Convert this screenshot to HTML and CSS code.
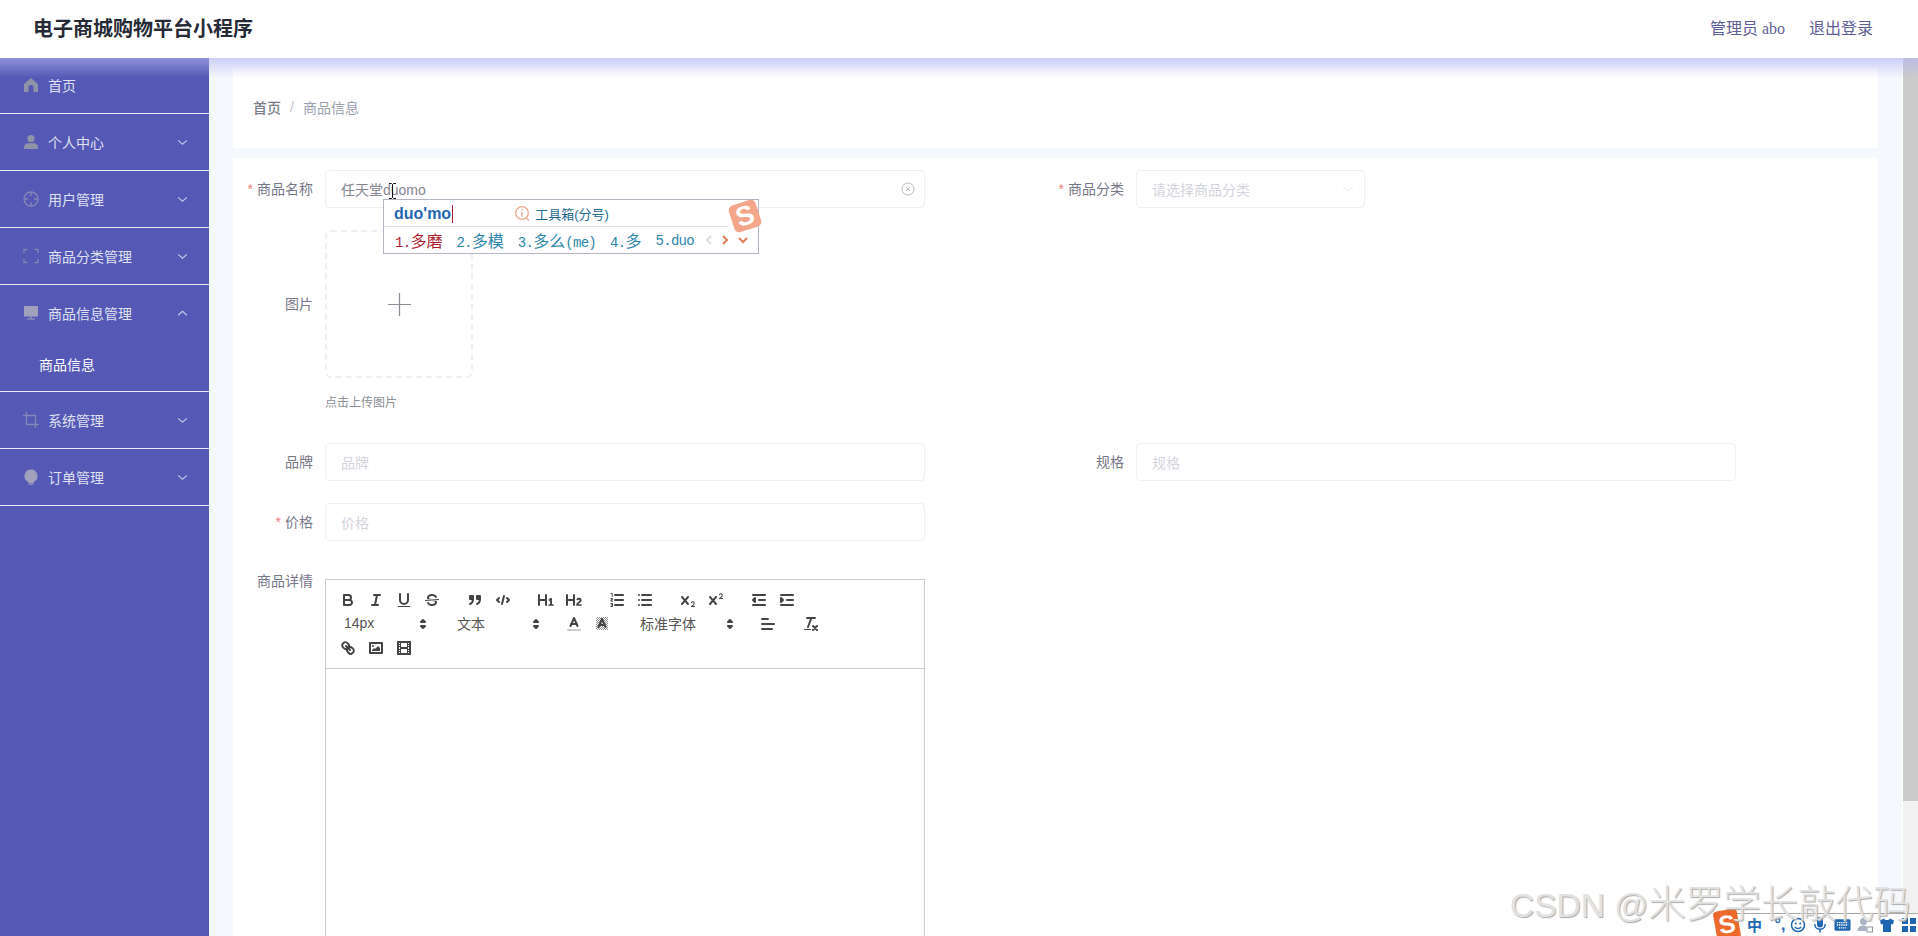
FILE: index.html
```html
<!DOCTYPE html>
<html lang="zh-CN">
<head>
<meta charset="utf-8">
<title>电子商城购物平台小程序</title>
<link rel="stylesheet" href="styles.css">
</head>
<body>
<header class="topbar">
  <div class="brand">电子商城购物平台小程序</div>
  <div class="topbar-right">
    <span class="topbar-user">管理员 abo</span>
    <span class="topbar-logout">退出登录</span>
  </div>
  <div class="topbar-glow"></div>
</header>
<div class="shell">
  <aside class="sidebar">
    <div class="nav-item nav-first">
      <svg class="nav-icon" viewBox="0 0 16 16"><path d="M8 1 15 7v8h-4.500v-4.500a2.500 2.500 0 0 0-5 0V15H1V7z"/></svg>
      <span>首页</span>
    </div>
    <div class="nav-item">
      <svg class="nav-icon" viewBox="0 0 16 16"><circle cx="8" cy="4.600" r="3.600"/><path d="M1 15v-2c0-2.500 2-3.800 4-3.800h6c2 0 4 1.300 4 3.800v2z"/></svg>
      <span>个人中心</span>
      <svg class="nav-arrow" viewBox="0 0 12 8"><polyline points="1,1.500 6,6 11,1.500"/></svg>
    </div>
    <div class="nav-item">
      <svg class="nav-icon nav-icon-line" viewBox="0 0 16 16"><circle cx="8" cy="8" r="7"/><path d="M8 1v4M8 11v4M1 8h4M11 8h4"/></svg>
      <span>用户管理</span>
      <svg class="nav-arrow" viewBox="0 0 12 8"><polyline points="1,1.500 6,6 11,1.500"/></svg>
    </div>
    <div class="nav-item">
      <svg class="nav-icon nav-icon-line" viewBox="0 0 16 16"><path d="M1 5V1.500h3.500M11.500 1.500H15V5M15 11v3.500h-3.500M4.500 14.500H1V11"/></svg>
      <span>商品分类管理</span>
      <svg class="nav-arrow" viewBox="0 0 12 8"><polyline points="1,1.500 6,6 11,1.500"/></svg>
    </div>
    <div class="nav-group">
      <div class="nav-title">
        <svg class="nav-icon nav-icon-bright" viewBox="0 0 16 16"><rect x="1" y="1" width="14" height="10.500"/><rect x="7.300" y="11.500" width="1.400" height="2"/><rect x="4" y="13.500" width="8" height="1"/></svg>
        <span>商品信息管理</span>
        <svg class="nav-arrow" viewBox="0 0 12 8"><polyline points="1,6 6,1.500 11,6"/></svg>
      </div>
      <div class="nav-sub">商品信息</div>
    </div>
    <div class="nav-item">
      <svg class="nav-icon nav-icon-line" viewBox="0 0 16 16"><path d="M3.500 0v12.500H16M0 3.500h12.500V16"/></svg>
      <span>系统管理</span>
      <svg class="nav-arrow" viewBox="0 0 12 8"><polyline points="1,1.500 6,6 11,1.500"/></svg>
    </div>
    <div class="nav-item">
      <svg class="nav-icon nav-icon-bright" viewBox="0 0 16 16"><path d="M8 .5a6.500 6.500 0 0 1 3.500 12c-.5.5-.8 1-1 1.500h-5c-.2-.5-.5-1-1-1.500A6.500 6.500 0 0 1 8 .5z"/><rect x="5.500" y="14.500" width="5" height="1.200"/></svg>
      <span>订单管理</span>
      <svg class="nav-arrow" viewBox="0 0 12 8"><polyline points="1,1.500 6,6 11,1.500"/></svg>
    </div>
  </aside>

  <main class="content">
    <nav class="crumbs">
      <span class="crumb-home">首页</span>
      <span class="crumb-sep">/</span>
      <span class="crumb-current">商品信息</span>
    </nav>
    <section class="form-card">
      <div class="form-row">
        <div class="field">
          <label class="field-label"><i class="req">*</i>商品名称</label>
          <div class="input">
            <span class="input-value">任天堂duomo</span>
            <svg class="input-clear" viewBox="0 0 14 14"><circle cx="7" cy="7" r="6"/><path d="M5 5l4 4M9 5l-4 4"/></svg>
          </div>
        </div>
        <div class="field">
          <label class="field-label"><i class="req">*</i>商品分类</label>
          <div class="input input-select">
            <span class="input-ph">请选择商品分类</span>
            <svg class="select-arrow" viewBox="0 0 12 8"><polyline points="1,1.500 6,6 11,1.500"/></svg>
          </div>
        </div>
      </div>

      <div class="upload-row">
        <label class="field-label upload-label">图片</label>
        <div class="upload-box"><svg class="upload-plus" viewBox="0 0 24 24"><path d="M12 0v24M0 12h24"/></svg></div>
      </div>
      <div class="upload-hint">点击上传图片</div>

      <div class="form-row">
        <div class="field">
          <label class="field-label">品牌</label>
          <div class="input"><span class="input-ph">品牌</span></div>
        </div>
        <div class="field">
          <label class="field-label">规格</label>
          <div class="input"><span class="input-ph">规格</span></div>
        </div>
      </div>

      <div class="form-row">
        <div class="field">
          <label class="field-label"><i class="req">*</i>价格</label>
          <div class="input"><span class="input-ph">价格</span></div>
        </div>
      </div>

      <div class="editor-row">
        <label class="field-label editor-label">商品详情</label>
        <div class="editor">
          <div class="toolbar">
            <div class="tb-line">
              <div class="tb-group">
                <button class="tb-btn"><svg viewBox="0 0 18 18"><path d="M5,4H9.500A2.500,2.500,0,0,1,12,6.500v0A2.500,2.500,0,0,1,9.500,9H5A0,0,0,0,1,5,9V4A0,0,0,0,1,5,4Z"/><path d="M5,9h5.500A2.500,2.500,0,0,1,13,11.500v0A2.500,2.500,0,0,1,10.500,14H5a0,0,0,0,1,0,0V9A0,0,0,0,1,5,9Z"/></svg></button>
                <button class="tb-btn"><svg viewBox="0 0 18 18"><path d="M7 4h6M5 14h6M8 14l2-10"/></svg></button>
                <button class="tb-btn"><svg viewBox="0 0 18 18"><path d="M5,3V9a4,4,0,0,0,4,4H9a4,4,0,0,0,4-4V3"/><rect class="fill" x="3" y="15" width="12" height="1" rx=".5"/></svg></button>
                <button class="tb-btn"><svg viewBox="0 0 18 18"><path class="thin" d="M15.500 8.500 2.500 9.500"/><path class="fill" d="M9.007,8C6.542,7.791,6,7.519,6,6.500,6,5.792,7.283,5,9,5c1.571,0,2.765.679,2.969,1.309a1,1,0,0,0,1.900-.617C13.356,4.106,11.354,3,9,3,6.200,3,4,4.538,4,6.500a3.200,3.200,0,0,0,.5,1.843Z"/><path class="fill" d="M8.984,10C11.457,10.208,12,10.479,12,11.500c0,.708-1.283,1.500-3,1.500-1.571,0-2.765-.679-2.969-1.309a1,1,0,1,0-1.900.617C4.644,13.894,6.646,15,9,15c2.800,0,5-1.538,5-3.500a3.200,3.200,0,0,0-.5-1.843Z"/></svg></button>
              </div>
              <div class="tb-group">
                <button class="tb-btn"><svg viewBox="0 0 18 18"><rect class="solid" x="4" y="5" width="3" height="3"/><rect class="solid" x="11" y="5" width="3" height="3"/><path d="M7,8c0,4-3,5-3,5"/><path d="M14,8c0,4-3,5-3,5"/></svg></button>
                <button class="tb-btn"><svg viewBox="0 0 18 18"><polyline points="5 7 3 9 5 11"/><polyline points="13 7 15 9 13 11"/><path d="M10 5 8 13"/></svg></button>
              </div>
              <div class="tb-group">
                <button class="tb-btn"><svg viewBox="0 0 18 18"><path class="fill" d="M10,4V14a1,1,0,0,1-2,0V10H3v4a1,1,0,0,1-2,0V4A1,1,0,0,1,3,4V8H8V4a1,1,0,0,1,2,0Zm6.068,9.209H14.990V7.599a.541.541,0,0,0-.605-.605h-.627a1.011,1.011,0,0,0-.748.297L11.645,8.566a.544.544,0,0,0-.022.858l.286.308a.539.539,0,0,0,.847.033l.099-.088a1.214,1.214,0,0,0,.242-.353h.022s-.011.309-.011.605V13.209H12.041a.541.541,0,0,0-.605.605v.439a.541.541,0,0,0,.605.605h4.027a.541.541,0,0,0,.605-.605v-.439A.541.541,0,0,0,16.068,13.209Z"/></svg></button>
                <button class="tb-btn"><svg viewBox="0 0 18 18"><path class="fill" d="M16.740,13.814v.439a.541.541,0,0,1-.605.605H11.855a.584.584,0,0,1-.649-.605V14.013c0-2.905,3.399-3.422,3.399-4.555a.777.777,0,0,0-.847-.781,1.177,1.177,0,0,0-.836.385c-.275.264-.561.374-.858.132l-.429-.341c-.308-.242-.385-.518-.154-.814a2.972,2.972,0,0,1,2.454-1.177,2.454,2.454,0,0,1,2.684,2.409c0,2.453-3.179,2.927-3.278,3.938h2.794A.541.541,0,0,1,16.740,13.814ZM9,3A1,1,0,0,0,8,4V8H3V4A1,1,0,0,0,1,4V14a1,1,0,0,0,2,0V10H8v4a1,1,0,0,0,2,0V4A1,1,0,0,0,9,3Z"/></svg></button>
              </div>
              <div class="tb-group">
                <button class="tb-btn"><svg viewBox="0 0 18 18"><path d="M7 4h8M7 9h8M7 14h8"/><path class="thin" d="M3 2.500h1.200v3M2.800 7.500h1.700v1.300H3v1.400h1.600M2.800 12.500h1.700v3H2.800M3.200 14h1.200"/></svg></button>
                <button class="tb-btn"><svg viewBox="0 0 18 18"><path d="M6 4h9M6 9h9M6 14h9M3 4h.01M3 9h.01M3 14h.01"/></svg></button>
              </div>
              <div class="tb-group">
                <button class="tb-btn"><svg viewBox="0 0 18 18"><path class="fill" d="M15.500,15H13.861a3.858,3.858,0,0,0,1.914-2.975,1.805,1.805,0,0,0-1.600-1.751A1.921,1.921,0,0,0,12.021,11.700a.5.5,0,1,0,.957.291h0a.914.914,0,0,1,1.053-.725.81.81,0,0,1,.744.762c0,1.076-1.170,1.870-1.940,2.431A1.456,1.456,0,0,0,12,15.500a.5.5,0,0,0,.5.5h3A.5.5,0,0,0,15.500,15Z"/><path class="fill" d="M9.650,5.241a1,1,0,0,0-1.409.108L6,7.964,3.759,5.349A1,1,0,0,0,2.192,6.592q.023.030.049.057L4.684,9.500,2.241,12.350A1,1,0,0,0,3.710,13.707q.026-.028.049-.057L6,11.036,8.241,13.650a1,1,0,1,0,1.567-1.243q-.023-.030-.049-.057L7.316,9.500,9.759,6.651A1,1,0,0,0,9.650,5.241Z"/></svg></button>
                <button class="tb-btn"><svg viewBox="0 0 18 18"><path class="fill" d="M15.500,7H13.861a4.015,4.015,0,0,0,1.914-2.975,1.800,1.800,0,0,0-1.600-1.751A1.922,1.922,0,0,0,12.021,3.700a.5.5,0,1,0,.957.291.917.917,0,0,1,1.053-.725.81.81,0,0,1,.744.762c0,1.077-1.164,1.925-1.934,2.486A1.423,1.423,0,0,0,12,7.500a.5.5,0,0,0,.5.5h3A.5.5,0,0,0,15.500,7Z"/><path class="fill" d="M9.650,5.241a1,1,0,0,0-1.409.108L6,7.964,3.759,5.349A1,1,0,0,0,2.192,6.592q.023.030.049.057L4.684,9.500,2.241,12.350A1,1,0,0,0,3.710,13.707q.026-.028.049-.057L6,11.036,8.241,13.650a1,1,0,1,0,1.567-1.243q-.023-.030-.049-.057L7.316,9.500,9.759,6.651A1,1,0,0,0,9.650,5.241Z"/></svg></button>
              </div>
              <div class="tb-group">
                <button class="tb-btn"><svg viewBox="0 0 18 18"><path d="M3 14h12M3 4h12M9 9h6"/><polyline class="solid" points="5 7 5 11 3 9 5 7"/></svg></button>
                <button class="tb-btn"><svg viewBox="0 0 18 18"><path d="M3 14h12M3 4h12M9 9h6"/><polyline class="solid" points="3 7 3 11 5 9 3 7"/></svg></button>
              </div>
            </div>
            <div class="tb-line">
              <div class="tb-group">
                <div class="tb-picker tb-picker-size"><span>14px</span><svg viewBox="0 0 18 18"><polygon points="7 11 9 13 11 11 7 11"/><polygon points="7 7 9 5 11 7 7 7"/></svg></div>
              </div>
              <div class="tb-group">
                <div class="tb-picker tb-picker-size"><span>文本</span><svg viewBox="0 0 18 18"><polygon points="7 11 9 13 11 11 7 11"/><polygon points="7 7 9 5 11 7 7 7"/></svg></div>
              </div>
              <div class="tb-group">
                <button class="tb-btn"><svg viewBox="0 0 18 18"><path class="under" d="M3 15h12"/><polyline points="5.500 11 9 3 12.500 11"/><path d="M11.630 9H6.380"/></svg></button>
                <button class="tb-btn"><svg viewBox="0 0 18 18"><defs><pattern id="hatch" width="2" height="2" patternUnits="userSpaceOnUse"><rect class="fill" width="1" height="1"/><rect class="fill" x="1" y="1" width="1" height="1"/></pattern></defs><rect class="hatch" x="3" y="2" width="12" height="13"/><polyline points="5.500 12 9 4 12.500 12"/><path d="M11.630 10H6.380"/></svg></button>
              </div>
              <div class="tb-group">
                <div class="tb-picker tb-picker-font"><span>标准字体</span><svg viewBox="0 0 18 18"><polygon points="7 11 9 13 11 11 7 11"/><polygon points="7 7 9 5 11 7 7 7"/></svg></div>
              </div>
              <div class="tb-group">
                <button class="tb-btn"><svg viewBox="0 0 18 18"><path d="M3 9h12M3 14h10M3 4h6"/></svg></button>
              </div>
              <div class="tb-group">
                <button class="tb-btn"><svg viewBox="0 0 18 18"><path d="M5 3h8M6 12 9.350 3M11 11l4 4M15 11l-4 4"/><rect class="fill" x="2" y="14" width="7" height="1" rx=".5"/></svg></button>
              </div>
            </div>
            <div class="tb-line">
              <div class="tb-group">
                <button class="tb-btn"><svg viewBox="0 0 18 18"><path d="M7 7l4 4"/><path d="M8.900,4.577a3.476,3.476,0,0,1,.36,4.679A3.476,3.476,0,0,1,4.577,8.900C3.185,7.500,2.035,6.400,4.217,4.217S7.500,3.185,8.900,4.577Z"/><path d="M13.423,9.100a3.476,3.476,0,0,0-4.679-.36,3.476,3.476,0,0,0,.36,4.679c1.392,1.392,2.500,2.542,4.679.36S14.815,10.500,13.423,9.100Z"/></svg></button>
                <button class="tb-btn"><svg viewBox="0 0 18 18"><rect x="3" y="4" width="12" height="10"/><circle class="fill" cx="6" cy="7" r="1"/><polyline class="fill" points="5 12 5 11 7 9 8 10 11 7 13 9 13 12 5 12"/></svg></button>
                <button class="tb-btn"><svg viewBox="0 0 18 18"><rect x="3" y="3" width="12" height="12"/><rect class="fill" x="5" y="3" width="1" height="12"/><rect class="fill" x="12" y="3" width="1" height="12"/><rect class="fill" x="5" y="8" width="8" height="2"/><rect class="fill" x="3" y="5" width="3" height="1"/><rect class="fill" x="3" y="7" width="3" height="1"/><rect class="fill" x="3" y="10" width="3" height="1"/><rect class="fill" x="3" y="12" width="3" height="1"/><rect class="fill" x="12" y="5" width="3" height="1"/><rect class="fill" x="12" y="7" width="3" height="1"/><rect class="fill" x="12" y="10" width="3" height="1"/><rect class="fill" x="12" y="12" width="3" height="1"/></svg></button>
              </div>
            </div>
          </div>
          <div class="editor-body"></div>
        </div>
      </div>
    </section>
  </main>
  <div class="scrollbar"><div class="scrollbar-thumb"></div></div>
</div>

<div class="ime-popup">
  <div class="ime-top">
    <span class="ime-pinyin">duo'mo</span><span class="ime-caret"></span>
    <svg class="ime-info" viewBox="0 0 16 16"><circle cx="7.500" cy="7.500" r="6"/><path d="M7.500 6.500v4.500M7.500 4v1.300M11.500 12l2.500 2.500"/></svg>
    <span class="ime-tool">工具箱(分号)</span>
  </div>
  <div class="ime-list">
    <span class="ime-cand ime-cand-on"><span class="ime-lat">1.</span>多磨</span>
    <span class="ime-cand"><span class="ime-lat">2.</span>多模</span>
    <span class="ime-cand"><span class="ime-lat">3.</span>多么<span class="ime-lat">(me)</span></span>
    <span class="ime-cand"><span class="ime-lat">4.</span>多</span>
    <span class="ime-cand"><span class="ime-lat">5.duo</span></span>
    <svg class="ime-nav" viewBox="0 0 50 12"><polyline class="ime-nav-off" points="8,2 4,6 8,10"/><polyline points="20,2 24,6 20,10"/><polyline points="36,4 40,8 44,4"/></svg>
  </div>
  <span class="ime-logo">S</span>
</div>
<svg class="ibeam" viewBox="0 0 9 16"><path d="M1 .5h2.500L4.500 1.500 5.500.5H8M4.500 1.500v13M1 15.500h2.500l1-1 1 1H8"/></svg>

<div class="watermark"><span class="wm-latin">CSDN @</span><span class="wm-cjk">米罗学长敲代码</span></div>

<div class="ime-status">
  <span class="status-logo">S</span>
  <span class="status-zh">中</span>
  <span class="status-punct">°,</span>
  <svg class="status-icon" viewBox="0 0 16 16"><circle class="line" cx="8" cy="8" r="6.500"/><circle cx="5.800" cy="6.500" r="1"/><circle cx="10.200" cy="6.500" r="1"/><path class="line" d="M4.800 9.800c1.500 2.200 4.900 2.200 6.400 0"/></svg>
  <svg class="status-icon" viewBox="0 0 16 16"><rect x="5" y="0" width="6" height="10.500" rx="3"/><path class="line" d="M2.800 7c0 7 10.400 7 10.400 0M8 13v2.500"/></svg>
  <svg class="status-icon status-wide" viewBox="0 0 18 14"><rect x=".5" y="1" width="17" height="12" rx="1.500"/><path class="keys" d="M3 4.500h12M3 7h12M5 10h8"/></svg>
  <svg class="status-icon status-gray" viewBox="0 0 16 16"><circle cx="6.500" cy="4.500" r="3.500"/><path d="M.5 14c0-3.500 2.500-5.500 6-5.500 1 0 2 .2 2.800.6V14z"/><rect class="lock" x="10" y="10" width="5.500" height="5"/></svg>
  <svg class="status-icon" viewBox="0 0 16 16"><path d="M5 1.500 1 3.500l1 4 2-.5V15h8V7l2 .5 1-4-4-2C10.500 3.500 5.500 3.500 5 1.500z"/></svg>
  <svg class="status-icon" viewBox="0 0 16 16"><rect x="1" y="1" width="6" height="6"/><rect x="9" y="1" width="6" height="6"/><rect x="1" y="9" width="6" height="6"/><rect x="9" y="9" width="6" height="6"/></svg>
</div>
</body>
</html>
```

FILE: styles.css
```css
* { box-sizing: border-box; }
html, body { margin: 0; height: 936px; overflow: hidden; background: #fff; }
body { font-family: "Liberation Sans", "Noto Sans CJK SC", sans-serif; font-size: 14px; color: #606266; position: relative; }

/* Top bar */
.topbar { height: 58px; background: #fff; display: flex; align-items: center; justify-content: space-between; padding: 0 45px 2px 33px; position: relative; z-index: 2; }
.brand { font-size: 20px; font-weight: 700; color: #262a36; line-height: 1; margin-top: 2px; }
.topbar-right { display: flex; gap: 24px; font-size: 16px; color: #5f5f97; font-family: "Liberation Serif", "Noto Sans CJK SC", serif; margin-bottom: 2px; }
.topbar-glow { position: absolute; left: 0; right: 0; top: 100%; height: 20px; background: linear-gradient(to bottom, rgba(180, 180, 245, .62), rgba(180, 180, 245, 0)); pointer-events: none; }

/* Shell */
.shell { display: flex; height: 878px; background: #f5f8fc; }

/* Sidebar */
.sidebar { width: 209px; flex: none; background: #5558b4; color: #dfe1f1; }
.nav-item, .nav-title { height: 57px; display: flex; align-items: center; padding: 0 21px 0 23px; gap: 9px; border-bottom: 1px solid #e9e9f6; }
.nav-first { height: 56px; padding-bottom: 2px; }
.nav-title { height: 56px; border-bottom: 0; }
.nav-item > span, .nav-title > span { flex: 1; }
.nav-group { border-bottom: 1px solid #e9e9f6; }
.nav-sub { height: 50px; line-height: 48px; padding-left: 39px; color: #fff; }
.nav-icon { width: 16px; height: 16px; flex: none; fill: #8e93a8; }
.nav-icon-bright { fill: #a1a1bd; }
.nav-icon-line { fill: none; stroke: #8587b8; stroke-width: 1.300; }
.nav-arrow { width: 11px; height: 7px; flex: none; fill: none; stroke: #c9cbe6; stroke-width: 1.200; }

/* Content */
.content { flex: 1; min-width: 0; padding: 10px 24px 0; display: flex; flex-direction: column; gap: 10px; overflow: hidden; }
.crumbs { height: 80px; flex: none; background: #fff; display: flex; align-items: center; padding: 0 0 2px 20px; gap: 9px; }
.crumb-home { color: #7a7e8a; font-weight: 500; }
.crumb-sep { color: #c0c4cc; }
.crumb-current { color: #97a0ae; }

.form-card { flex: 1; background: #fff; padding-top: 12px; min-height: 0; }
.form-row { display: flex; margin-bottom: 22px; }
.field { width: 811px; display: flex; }
.field-label { width: 92px; flex: none; padding-right: 12px; text-align: right; line-height: 38px; color: #777789; }
.req { color: #f08080; font-style: normal; margin-right: 4px; }
.input { width: 600px; height: 38px; border: 1px solid #eff0f6; border-radius: 4px; display: flex; align-items: center; justify-content: space-between; padding: 0 9px 0 15px; background: #fff; }
.input-select { width: 229px; padding-right: 10px; }
.input-value { color: #85858f; }
.input-ph { color: #d3d4dc; }
.input-clear { width: 14px; height: 14px; fill: none; stroke: #b9bac2; stroke-width: 1; }
.select-arrow { width: 12px; height: 8px; fill: none; stroke: #e6e7ee; stroke-width: 1; }

.upload-row { display: flex; }
.upload-label { line-height: 148px; }
.upload-box { width: 148px; height: 148px; border: 2px dashed #eeeef4; border-radius: 6px; display: flex; align-items: center; justify-content: center; }
.upload-plus { width: 23px; height: 23px; fill: none; stroke: #8d8f98; stroke-width: 1.300; }
.upload-hint { margin: 17px 0 31px 92px; font-size: 12px; line-height: 17px; color: #8d8f97; }

.editor-row { display: flex; margin-top: 30px; }
.editor-label { line-height: 20px; }
.editor { width: 600px; height: 400px; margin-top: 8px; border: 1px solid #ccc; flex: none; }
.toolbar { border-bottom: 1px solid #ccc; padding: 8px; display: flex; flex-direction: column; }
.tb-line { display: flex; height: 24px; }
.tb-group { display: flex; margin-right: 15px; }
.tb-btn { width: 28px; height: 24px; padding: 3px 5px; border: 0; background: none; display: block; }
.tb-btn svg { display: block; width: 18px; height: 18px; fill: none; stroke: #444; stroke-width: 2; stroke-linecap: round; stroke-linejoin: round; }
.tb-btn svg .fill { fill: #444; stroke: none; }
.tb-btn svg .solid { fill: #444; }
.tb-btn svg .thin { stroke-width: 1; }
.tb-btn svg .under { stroke: #ccc; }
.tb-btn svg .hatch { fill: url(#hatch); stroke: none; opacity: .6; }
.tb-picker { width: 98px; height: 24px; display: flex; align-items: center; justify-content: space-between; color: #555; font-size: 14px; padding-left: 10px; }
.tb-picker span { position: relative; top: -1px; }
.tb-picker-font { width: 108px; padding-left: 9px; }
.tb-picker svg { width: 18px; height: 18px; fill: #444; stroke: #444; stroke-width: 2; stroke-linejoin: round; }
.editor-body { height: 320px; }

/* Scrollbar */
.scrollbar { width: 16px; flex: none; background: #f1f1f1; border-left: 1px solid #fff; }
.scrollbar-thumb { height: 743px; background: #cbcbcb; }

/* IME popup */
.ime-popup { position: absolute; left: 383px; top: 199px; width: 376px; height: 55px; background: #fff; border: 1px solid #b3b6c2; z-index: 5; }
.ime-top { height: 27px; margin-right: 30px; border-bottom: 1px solid #dcdde3; display: flex; align-items: center; padding: 1px 0 0 10px; }
.ime-pinyin { font-weight: 700; font-size: 16px; color: #1f66b2; }
.ime-caret { width: 1px; height: 18px; background: #a8192e; margin-left: 1px; }
.ime-info { width: 17px; height: 17px; margin-left: 61px; fill: none; stroke: #eba98c; stroke-width: 1.200; }
.ime-tool { font-size: 13px; color: #1f6a92; margin-left: 4px; }
.ime-list { height: 26px; display: flex; align-items: center; padding-left: 11px; gap: 14px; font-size: 16px; color: #2c86ad; position: relative; }
.ime-lat { font-family: "Liberation Mono", monospace; font-size: 14px; letter-spacing: -.7px; }
.ime-cand-on { color: #ae1f33; }
.ime-nav { position: absolute; left: 319px; top: 7px; width: 50px; height: 12px; fill: none; stroke: #e0815a; stroke-width: 2; }
.ime-nav .ime-nav-off { stroke: #dcdcdc; }
.ime-logo { position: absolute; right: -1px; top: 2px; width: 28px; height: 28px; border-radius: 5px; background: #f3a68a; color: #fff; font: 700 27px/28px "Liberation Sans", sans-serif; text-align: center; transform: rotate(-18deg); }
.ibeam { position: absolute; left: 388px; top: 183px; width: 9px; height: 16px; fill: none; stroke: #111; stroke-width: 1; z-index: 6; }

/* Watermark */
.watermark { position: absolute; left: 1510px; top: 881px; white-space: nowrap; color: #e2e2e2; text-shadow: 1px 1px 1px #aaa; z-index: 8; line-height: 46px; display: flex; align-items: baseline; }
.wm-latin { font-size: 33.500px; white-space: pre; }
.wm-cjk { font-size: 37.500px; font-weight: 300; }

/* IME status bar */
.ime-status { position: absolute; left: 1713px; right: 0; top: 913px; height: 23px; background: #fff; border-top: 1px solid #a7a7a7; display: flex; align-items: center; z-index: 7; color: #1f66b2; gap: 6px; padding-left: 34px; }
.status-logo { position: absolute; left: 2px; top: -4px; width: 24px; height: 30px; border-radius: 4px; background: #ec6a2c; color: #fff; font: 700 25px/28px "Liberation Sans", sans-serif; text-align: center; transform: rotate(-10deg); }
.status-zh { font-size: 15px; font-weight: 700; line-height: 1; }
.status-punct { font-weight: 700; font-size: 16px; line-height: 1; width: 20px; margin-left: 2px; margin-right: -6px; text-align: center; }
.status-icon { width: 16px; height: 16px; flex: none; fill: #1f66b2; }
.status-icon .line { fill: none; stroke: #1f66b2; stroke-width: 1.500; }
.status-wide { width: 17px; }
.status-wide .keys { stroke: #fff; stroke-width: 1.500; stroke-dasharray: 1.500 .8; }
.status-gray { fill: #a9b3c2; }
.status-gray .lock { fill: #fff; stroke: #8e96a3; stroke-width: 1; }
```
